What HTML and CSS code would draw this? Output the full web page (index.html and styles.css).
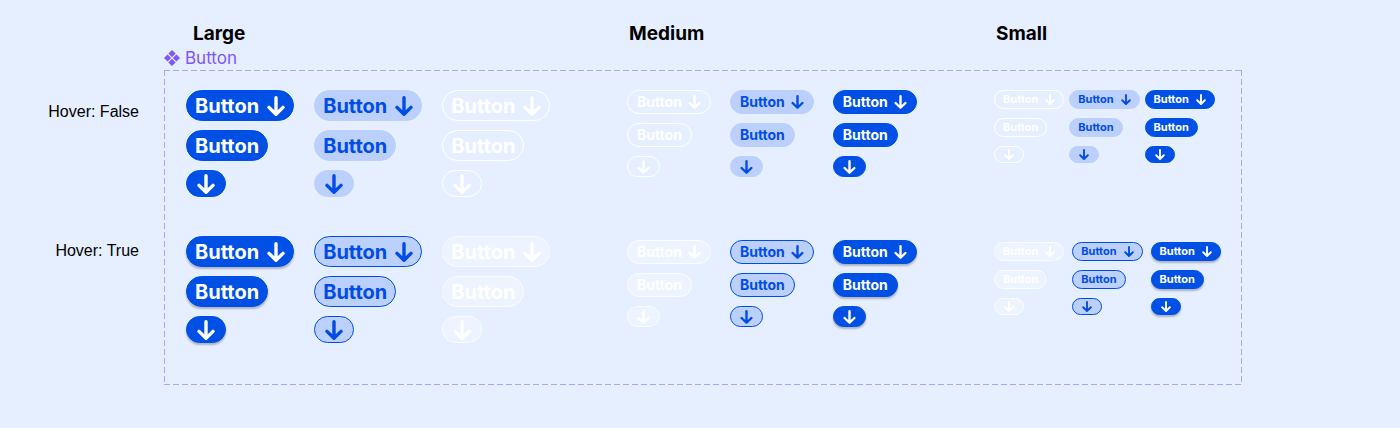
FILE: index.html
```
<!DOCTYPE html>
<html lang="en">
<head>
<meta charset="utf-8">
<meta name="viewport" content="width=device-width, initial-scale=1">
<title>Button variants</title>
<link rel="stylesheet" href="styles.css">
</head>
<body>
<svg class="sprite" aria-hidden="true">
  <symbol id="arrow" viewBox="0 0 18 20"><path d="M9 1.7V18M2 11.4L9 18.2L16 11.4"/></symbol>
</svg>
<main class="board">
  <header class="sizes">
    <h2 class="size-title first">Large</h2>
    <h2 class="size-title">Medium</h2>
    <h2 class="size-title">Small</h2>
  </header>
  <p class="component">
    <svg class="component-icon" viewBox="0 0 16 16" aria-hidden="true"><path d="M8 0L11.6 3.6L8 7.2L4.4 3.6ZM8 8.8L11.6 12.4L8 16L4.4 12.4ZM3.6 4.4L7.2 8L3.6 11.6L0 8ZM12.4 4.4L16 8L12.4 11.6L8.8 8Z"/></svg>
    Button
  </p>
  <div class="states">
    <p class="state">Hover: False</p>
    <p class="state">Hover: True</p>
  </div>
  <div class="frame" id="frame"></div>
</main>
<script src="variants.js"></script>
</body>
</html>
```

FILE: styles.css
```
body {
  margin: 0;
  background: #e6efff;
  color: #000;
  font-family: Inter, "Liberation Sans", sans-serif;
}

h2, p {
  margin: 0;
}

.sprite {
  position: absolute;
  width: 0;
  height: 0;
}

.board {
  display: grid;
  grid-template-columns: 139px 1fr;
  column-gap: 25px;
  padding: 22px 158px 43px 0;
}

.sizes, .component, .frame {
  grid-column: 2;
}

.sizes, .frame {
  display: grid;
  grid-template-columns: 441fr 367fr 248fr;
  padding-left: 22px;
}

.size-title {
  padding-left: 2px;
  font-size: 19px;
  font-weight: 700;
  line-height: 24px;
}

.size-title.first {
  padding-left: 7px;
}

.component {
  display: flex;
  align-items: center;
  gap: 5px;
  color: #7f56fb;
  font-size: 17px;
  line-height: 24px;
}

.component-icon {
  width: 16px;
  height: 16px;
  fill: currentColor;
}

.states {
  display: grid;
  grid-column: 1;
  grid-template-rows: 139px auto;
  padding-top: 30px;
  text-align: right;
}

.state {
  font-family: "Liberation Sans", Arial, sans-serif;
  font-size: 16px;
  line-height: 24px;
  white-space: nowrap;
}

.frame {
  --dash: #afa6f2 0 6px, transparent 6px 9px;
  grid-template-rows: 146px auto;
  padding-top: 20px;
  padding-bottom: 42px;
  background:
    repeating-linear-gradient(to right, var(--dash)) top / 100% 1px no-repeat,
    repeating-linear-gradient(to right, var(--dash)) bottom / 100% 1px no-repeat,
    repeating-linear-gradient(to bottom, var(--dash)) left / 1px 100% no-repeat,
    repeating-linear-gradient(to bottom, var(--dash)) right / 1px 100% no-repeat;
}

.group {
  display: flex;
  align-items: flex-start;
}

.stack {
  display: flex;
  flex-direction: column;
  align-items: flex-start;
  gap: 9px;
}

.large { column-gap: 20px; }
.medium { column-gap: 19px; }
.small { column-gap: 5px; }
.medium.hovered { padding-top: 4px; }
.small.hovered { padding-top: 6px; column-gap: 8px; }

.btn {
  display: flex;
  align-items: center;
  box-sizing: border-box;
  margin: 0;
  border: 1px solid transparent;
  border-radius: 16px;
  padding: 0 9px;
  font-family: inherit;
  font-weight: 700;
  white-space: nowrap;
  cursor: pointer;
}

.icon {
  flex: none;
  fill: none;
  stroke: currentColor;
  stroke-width: 3.4;
  stroke-linecap: round;
  stroke-linejoin: round;
}

.large .btn { gap: 8px; padding: 1px 8px 0; font-size: 20px; line-height: 28px; }
.large .icon { width: 18px; height: 20px; }
.large .icon-only { padding: 3px 10px 2px; }

.medium .btn { gap: 6px; font-size: 14px; line-height: 22px; }
.medium .icon { width: 13px; height: 14px; }
.medium .icon-only { padding: 3px 9px 2px; }

.small .btn { gap: 7px; padding: 0 8px; font-size: 11px; line-height: 17px; }
.small .icon { width: 10px; height: 11px; }
.small .icon-only { padding: 2px 9px; }

.primary {
  border-color: #0050e6;
  background: #0050e6;
  color: #fff;
}

.secondary {
  border-color: #bbd0fc;
  background: #bbd0fc;
  color: #004ce6;
}

.ghost {
  border-color: #fff;
  background: transparent;
  color: #fff;
}

.hovered .primary {
  box-shadow: 0 2px 2px rgba(0, 0, 0, 0.25);
}

.hovered .secondary {
  border-color: #004ce6;
}

.hovered .ghost {
  border-color: #fafcff;
  background: #eef4ff;
}
```

FILE: variants.js
```
const sizes = [
  ["large", ["primary", "secondary", "ghost"]],
  ["medium", ["ghost", "secondary", "primary"]],
  ["small", ["ghost", "secondary", "primary"]]
];
const icon = '<svg class="icon" aria-hidden="true"><use href="#arrow"/></svg>';

const stack = (kind) => `<div class="stack">
  <button type="button" class="btn ${kind}">Button${icon}</button>
  <button type="button" class="btn ${kind}">Button</button>
  <button type="button" class="btn icon-only ${kind}" aria-label="Down">${icon}</button>
</div>`;

document.getElementById("frame").innerHTML = ["", "hovered"].map((state) =>
  sizes.map(([size, kinds]) =>
    `<div class="group ${size} ${state}">${kinds.map(stack).join("")}</div>`
  ).join("")
).join("");
```
